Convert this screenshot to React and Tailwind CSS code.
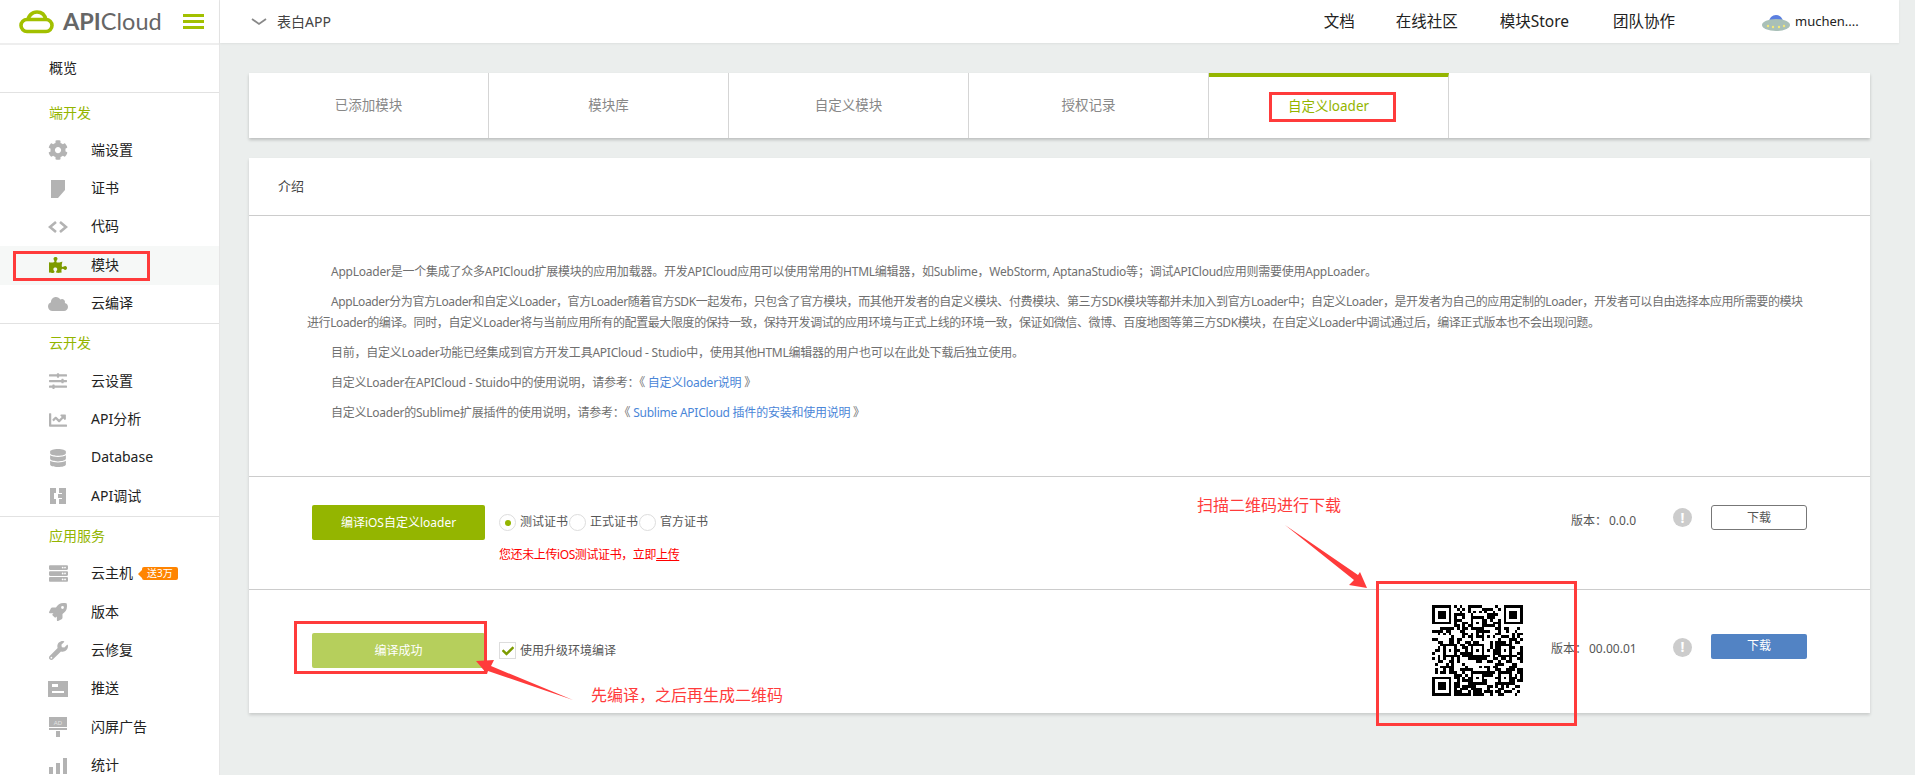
import { FaCog, FaPuzzlePiece, FaCloud, FaSlidersH, FaChartLine, FaDatabase, FaServer, FaRocket, FaWrench, FaCheck } from 'react-icons/fa';

// ── Small hand drawn icons ───────────────────────────────────────
const NoteIcon = () => (
  <svg width="20" height="20" viewBox="0 0 20 20" fill="#b3b3b3"><path d="M3 1h14v10l-7 8H3z" /></svg>
);
const CodeIcon = () => (
  <svg width="20" height="20" viewBox="0 0 20 20" fill="none" stroke="#b3b3b3" strokeWidth="2.6"><path d="M8 5l-6 5 6 5M12 5l6 5-6 5" /></svg>
);
const ApiIcon = () => (
  <svg width="18" height="18" viewBox="0 0 18 18" fill="#b3b3b3"><path d="M1 1h6v5H5v6h2v5H1zM17 1h-7v5h3v1H9v4h4v1h-3v5h7z" /></svg>
);
const PushIcon = () => (
  <svg width="20" height="16" viewBox="0 0 20 16" fill="#b3b3b3"><path fillRule="evenodd" d="M0 0h20v16H0zM4 3v3h6V3zM4 10v2h12v-2z" /></svg>
);
const AdIcon = () => (
  <svg width="18" height="20" viewBox="0 0 18 20" fill="#b3b3b3">
    <path d="M0 0h18v10H0zM0 11h18v2H0zM7 14h4v6H7z" />
    <text x="9" y="8" fontSize="6" fill="#e4e4e4" textAnchor="middle" fontFamily="Liberation Sans">AD</text>
  </svg>
);
const BarsIcon = () => (
  <svg width="18" height="16" viewBox="0 0 18 16" fill="#b3b3b3"><path d="M0 9h4v7H0zM7 5h4v11H7zM14 0h4v16h-4z" /></svg>
);

const gray = 'text-[#b3b3b3]';

const NAV = [
  {
    title: '端开发',
    items: [
      { label: '端设置', icon: <FaCog size={20} className={gray} /> },
      { label: '证书', icon: <NoteIcon /> },
      { label: '代码', icon: <CodeIcon /> },
      { label: '模块', icon: <FaPuzzlePiece size={18} className="text-[#7d9b00]" />, active: true },
      { label: '云编译', icon: <FaCloud size={20} className={gray} /> },
    ],
  },
  {
    title: '云开发',
    items: [
      { label: '云设置', icon: <FaSlidersH size={18} className={gray} /> },
      { label: 'API分析', icon: <FaChartLine size={18} className={gray} /> },
      { label: 'Database', icon: <FaDatabase size={18} className={gray} /> },
      { label: 'API调试', icon: <ApiIcon /> },
    ],
  },
  {
    title: '应用服务',
    items: [
      { label: '云主机', icon: <FaServer size={19} className={gray} />, badge: '送3万' },
      { label: '版本', icon: <FaRocket size={18} className={gray} /> },
      { label: '云修复', icon: <FaWrench size={19} className={gray} /> },
      { label: '推送', icon: <PushIcon /> },
      { label: '闪屏广告', icon: <AdIcon /> },
      { label: '统计', icon: <BarsIcon /> },
    ],
  },
];

const TABS = ['已添加模块', '模块库', '自定义模块', '授权记录', '自定义loader'];

// ── QR code: fake modules from a small seeded generator ──────────
function buildQrPath() {
  const size = 33;
  let seed = 0x2f6e2b1;
  const next = () => {
    seed ^= seed << 13;
    seed ^= seed >>> 17;
    seed ^= seed << 5;
    seed >>>= 0;
    return (seed >>> 11) & 1;
  };
  const ring = (dx, dy, s) => {
    if (dx < 0 || dy < 0 || dx >= s || dy >= s) return false;
    if (dx === 0 || dy === 0 || dx === s - 1 || dy === s - 1) return true;
    if (s === 7) return dx >= 2 && dx <= 4 && dy >= 2 && dy <= 4;
    return dx === 2 && dy === 2;
  };
  const finders = [[0, 0], [26, 0], [0, 26]];
  const aligns = [[24, 24], [14, 24], [14, 14], [24, 14], [14, 4], [4, 14]];
  let d = '';
  for (let y = 0; y < size; y++) {
    for (let x = 0; x < size; x++) {
      const bit = next();
      const finder = finders.find(([ox, oy]) => x >= ox - 1 && x <= ox + 7 && y >= oy - 1 && y <= oy + 7);
      const align = aligns.find(([ox, oy]) => x >= ox && x < ox + 5 && y >= oy && y < oy + 5);
      let on = bit === 1;
      if (finder) on = ring(x - finder[0], y - finder[1], 7);
      else if (align) on = ring(x - align[0], y - align[1], 5);
      if (on) d += `M${x} ${y}h1v1h-1z`;
    }
  }
  return d;
}

const WarnDot = ({ className = '' }) => (
  <span className={`flex h-[19px] w-[19px] items-center justify-center rounded-full bg-[#cccccc] text-[14px] font-bold leading-none text-white ${className}`}>!</span>
);

const Radio = ({ on, label }) => (
  <span className="flex items-center gap-[4px]">
    <span className="flex h-[17px] w-[17px] items-center justify-center rounded-full border border-[#dddddd] bg-white">
      {on && <span className="h-[6px] w-[6px] rounded-full bg-[#94b500]" />}
    </span>
    <span className="mr-[3px] -mt-[2px] w-[46px] whitespace-nowrap">{label}</span>
  </span>
);

export default function App() {
  return (
    <div className="relative flex h-[775px] overflow-hidden bg-[#ebeeed] font-['Noto_Sans','Noto_Sans_CJK_SC',sans-serif] text-[12px] text-[#555555]">
      {/* Sidebar */}
      <aside className="h-[775px] w-[220px] shrink-0 border-r border-[#e6e6e6] bg-white text-[14px] text-[#222222]">
        <div className="box-content flex h-[43px] items-center border-b-2 border-[#eeeeee]">
          <svg width="36" height="24" viewBox="0 0 36 24" fill="none" stroke="#a2c000" strokeWidth="3.6" className="ml-[19px]">
            <path d="M9 11c0-5 4-9 9-9s8 3 9 8" />
            <rect x="2" y="9.5" width="31" height="12" rx="6" />
          </svg>
          <span className="ml-[8px] w-[97px] whitespace-nowrap font-['Lato',sans-serif] text-[23.5px] leading-none text-[#666666]">
            <span className="font-bold">API</span>Cloud
          </span>
          <span className="ml-[23px] flex w-[21px] flex-col gap-[3px]">
            <span className="h-[3px] bg-[#a2c000]" />
            <span className="h-[3px] bg-[#a2c000]" />
            <span className="h-[3px] bg-[#a2c000]" />
          </span>
        </div>
        <div className="flex h-[48px] items-center border-b border-[#e2e2e2] pb-[2px] pl-[49px]">概览</div>
        {NAV.map((group) => (
          <section key={group.title} className="border-b border-[#e2e2e2] last:border-b-0">
            <div className="flex h-[38px] items-center pl-[49px] text-[#94b500]">{group.title}</div>
            {group.items.map((item) => (
              <div key={item.label} className={`flex h-[38.4px] items-center ${item.active ? 'bg-[#f6f8f7]' : ''}`}>
                <span className="ml-[47px] flex w-[22px] justify-center">{item.icon}</span>
                <span className="-mt-[2px] ml-[22px] whitespace-nowrap">{item.label}</span>
                {item.badge && (
                  <span className="relative ml-[9px] rounded-[2px] bg-[#ff8400] px-[5px] text-[10px] leading-[13px] text-white">
                    <span className="absolute left-[-4px] top-[3px] h-0 w-0 border-y-[4px] border-r-[4px] border-y-transparent border-r-[#ff8400]" />
                    {item.badge}
                  </span>
                )}
              </div>
            ))}
          </section>
        ))}
      </aside>

      {/* Main column */}
      <main className="w-[1679px] shrink-0">
        <header className="flex h-[43px] items-center bg-white pr-[39px] text-[15.5px] text-[#222222] shadow-[0_1px_2px_rgba(0,0,0,0.06)]">
          <svg width="16" height="8" viewBox="0 0 16 8" fill="none" stroke="#888888" strokeWidth="1.8" className="ml-[31px]"><path d="M1 1l7 5 7-5" /></svg>
          <span className="ml-[10px] whitespace-nowrap text-[14px] text-[#444444]">表白APP</span>
          <span className="ml-auto whitespace-nowrap">文档</span>
          <span className="ml-[41px] whitespace-nowrap">在线社区</span>
          <span className="ml-[42px] whitespace-nowrap">模块Store</span>
          <span className="ml-[44px] whitespace-nowrap">团队协作</span>
          <svg width="28" height="20" viewBox="0 0 28 20" className="ml-[87px]">
            <path d="M7 10a7 7 0 0 1 14 0z" fill="#5b7fe0" />
            <ellipse cx="14" cy="13" rx="14" ry="6" fill="#a9c0b8" />
            <circle cx="6" cy="14" r="1.2" fill="#f2e77a" />
            <circle cx="11" cy="15" r="1.2" fill="#f2e77a" />
            <circle cx="17" cy="15" r="1.2" fill="#f2e77a" />
            <circle cx="22" cy="14" r="1.2" fill="#f2e77a" />
          </svg>
          <span className="ml-[5px] w-[65px] whitespace-nowrap text-[13px]">muchen....</span>
        </header>

        <div className="w-[1650px] pl-[29px] pt-[30px]">
          {/* Tabs */}
          <nav className="flex h-[65px] w-[1621px] bg-white text-[13.5px] text-[#888888] shadow-[0_2px_3px_rgba(0,0,0,0.2)]">
            {TABS.map((tab, i) => {
              const active = i === TABS.length - 1;
              return (
                <div
                  key={tab}
                  className={`flex w-[240px] items-center justify-center border-r border-[#d5d5d5] ${active ? 'border-t-4 border-t-[#94b500] pb-[2px] text-[#94b500]' : ''}`}
                >
                  {tab}
                </div>
              );
            })}
          </nav>

          {/* Loader card */}
          <div className="mt-[20px] w-[1621px] bg-white shadow-[0_2px_3px_rgba(0,0,0,0.15)]">
            <div className="flex h-[58px] items-center border-b border-[#cccccc] pl-[29px] text-[13px] text-[#444444]">介绍</div>

            <div className="h-[261px] border-b border-[#cccccc] pl-[58px] pr-[60px] pt-[45px] leading-[21px] tracking-[-0.24px] text-[#707070]">
              <p className="mb-[9px] indent-[24px]">AppLoader是一个集成了众多APICloud扩展模块的应用加载器。开发APICloud应用可以使用常用的HTML编辑器，如Sublime，WebStorm, AptanaStudio等；调试APICloud应用则需要使用AppLoader。</p>
              <p className="mb-[9px] indent-[24px] tracking-[-0.4px]">AppLoader分为官方Loader和自定义Loader，官方Loader随着官方SDK一起发布，只包含了官方模块，而其他开发者的自定义模块、付费模块、第三方SDK模块等都并未加入到官方Loader中；自定义Loader，是开发者为自己的应用定制的Loader，开发者可以自由选择本应用所需要的模块进行Loader的编译。同时，自定义Loader将与当前应用所有的配置最大限度的保持一致，保持开发调试的应用环境与正式上线的环境一致，保证如微信、微博、百度地图等第三方SDK模块，在自定义Loader中调试通过后，编译正式版本也不会出现问题。</p>
              <p className="mb-[9px] indent-[24px]">目前，自定义Loader功能已经集成到官方开发工具APICloud - Studio中，使用其他HTML编辑器的用户也可以在此处下载后独立使用。</p>
              <p className="mb-[9px] indent-[24px]">自定义Loader在APICloud - Stuido中的使用说明，请参考：《 <a className="text-[#4a86d8]">自定义loader说明</a> 》</p>
              <p className="indent-[24px]">自定义Loader的Sublime扩展插件的使用说明，请参考：《 <a className="text-[#4a86d8]">Sublime APICloud 插件的安装和使用说明</a> 》</p>
            </div>

            {/* iOS build row */}
            <div className="flex h-[113px] border-b border-[#cccccc] pl-[63px] pr-[63px] pt-[28px]">
              <button className="h-[35px] w-[173px] rounded-[2px] bg-[#94b500] text-[12px] text-white">编译iOS自定义loader</button>
              <div className="ml-[14px]">
                <div className="flex h-[35px] items-center">
                  <Radio on label="测试证书" />
                  <Radio label="正式证书" />
                  <Radio label="官方证书" />
                </div>
                <p className="mt-[6px] tracking-[-0.4px] text-[#ff0000]">您还未上传iOS测试证书，立即<span className="underline">上传</span></p>
              </div>
              <div className="ml-auto flex h-[25px] items-center">
                <span className="mt-[6px] flex w-[102px] whitespace-nowrap"><span className="w-[38px]">版本：</span>0.0.0</span>
                <WarnDot />
                <button className="ml-[19px] h-[25px] w-[96px] rounded-[3px] border border-[#777777] text-[#555555]">下载</button>
              </div>
            </div>

            {/* Built row */}
            <div className="flex h-[123px] items-center pb-[2px] pl-[63px] pr-[63px]">
              <button className="h-[35px] w-[173px] rounded-[2px] bg-[#b6cf5c] text-[12px] text-white">编译成功</button>
              <span className="ml-[14px] flex h-[17px] w-[17px] items-center justify-center border border-[#dddddd] bg-white">
                <FaCheck size={12} className="text-[#7d9b00]" />
              </span>
              <span className="ml-[4px]">使用升级环境编译</span>
              <svg width="91" height="91" viewBox="0 0 33 33" shapeRendering="crispEdges" className="ml-auto">
                <path d={buildQrPath()} fill="#000000" />
              </svg>
              <span className="mb-[3px] ml-[28px] flex w-[122px] whitespace-nowrap"><span className="w-[38px]">版本：</span>00.00.01</span>
              <WarnDot className="mb-[7px]" />
              <button className="mb-[9px] ml-[19px] h-[25px] w-[96px] rounded-[2px] bg-[#5283c4] text-white">下载</button>
            </div>
          </div>
        </div>
      </main>

      {/* Red annotations drawn over the screenshot */}
      <div className="absolute left-[13px] top-[251px] h-[30px] w-[137px] border-[3px] border-[#ff3b3b]" />
      <div className="absolute left-[1269px] top-[92px] h-[30px] w-[127px] border-[3px] border-[#ff3b3b]" />
      <div className="absolute left-[294px] top-[621px] h-[53px] w-[193px] border-[3px] border-[#ff3b3b]" />
      <div className="absolute left-[1376px] top-[581px] h-[145px] w-[201px] border-[3px] border-[#ff3b3b]" />
      <span className="absolute left-[591px] top-[683px] whitespace-nowrap text-[16px] leading-[24px] text-[#ff3b3b]">先编译，之后再生成二维码</span>
      <span className="absolute left-[1197px] top-[493px] whitespace-nowrap text-[16px] leading-[24px] text-[#ff3b3b]">扫描二维码进行下载</span>
      <svg width="1915" height="775" className="pointer-events-none absolute left-0 top-0">
        <polygon points="476,661 494,660 491,666 573,700 488,671 487,674" fill="#ff3b3b" />
        <polygon points="1367,588 1349,585 1354,580 1285,525 1358,575 1360,572" fill="#ff3b3b" />
      </svg>
    </div>
  );
}
